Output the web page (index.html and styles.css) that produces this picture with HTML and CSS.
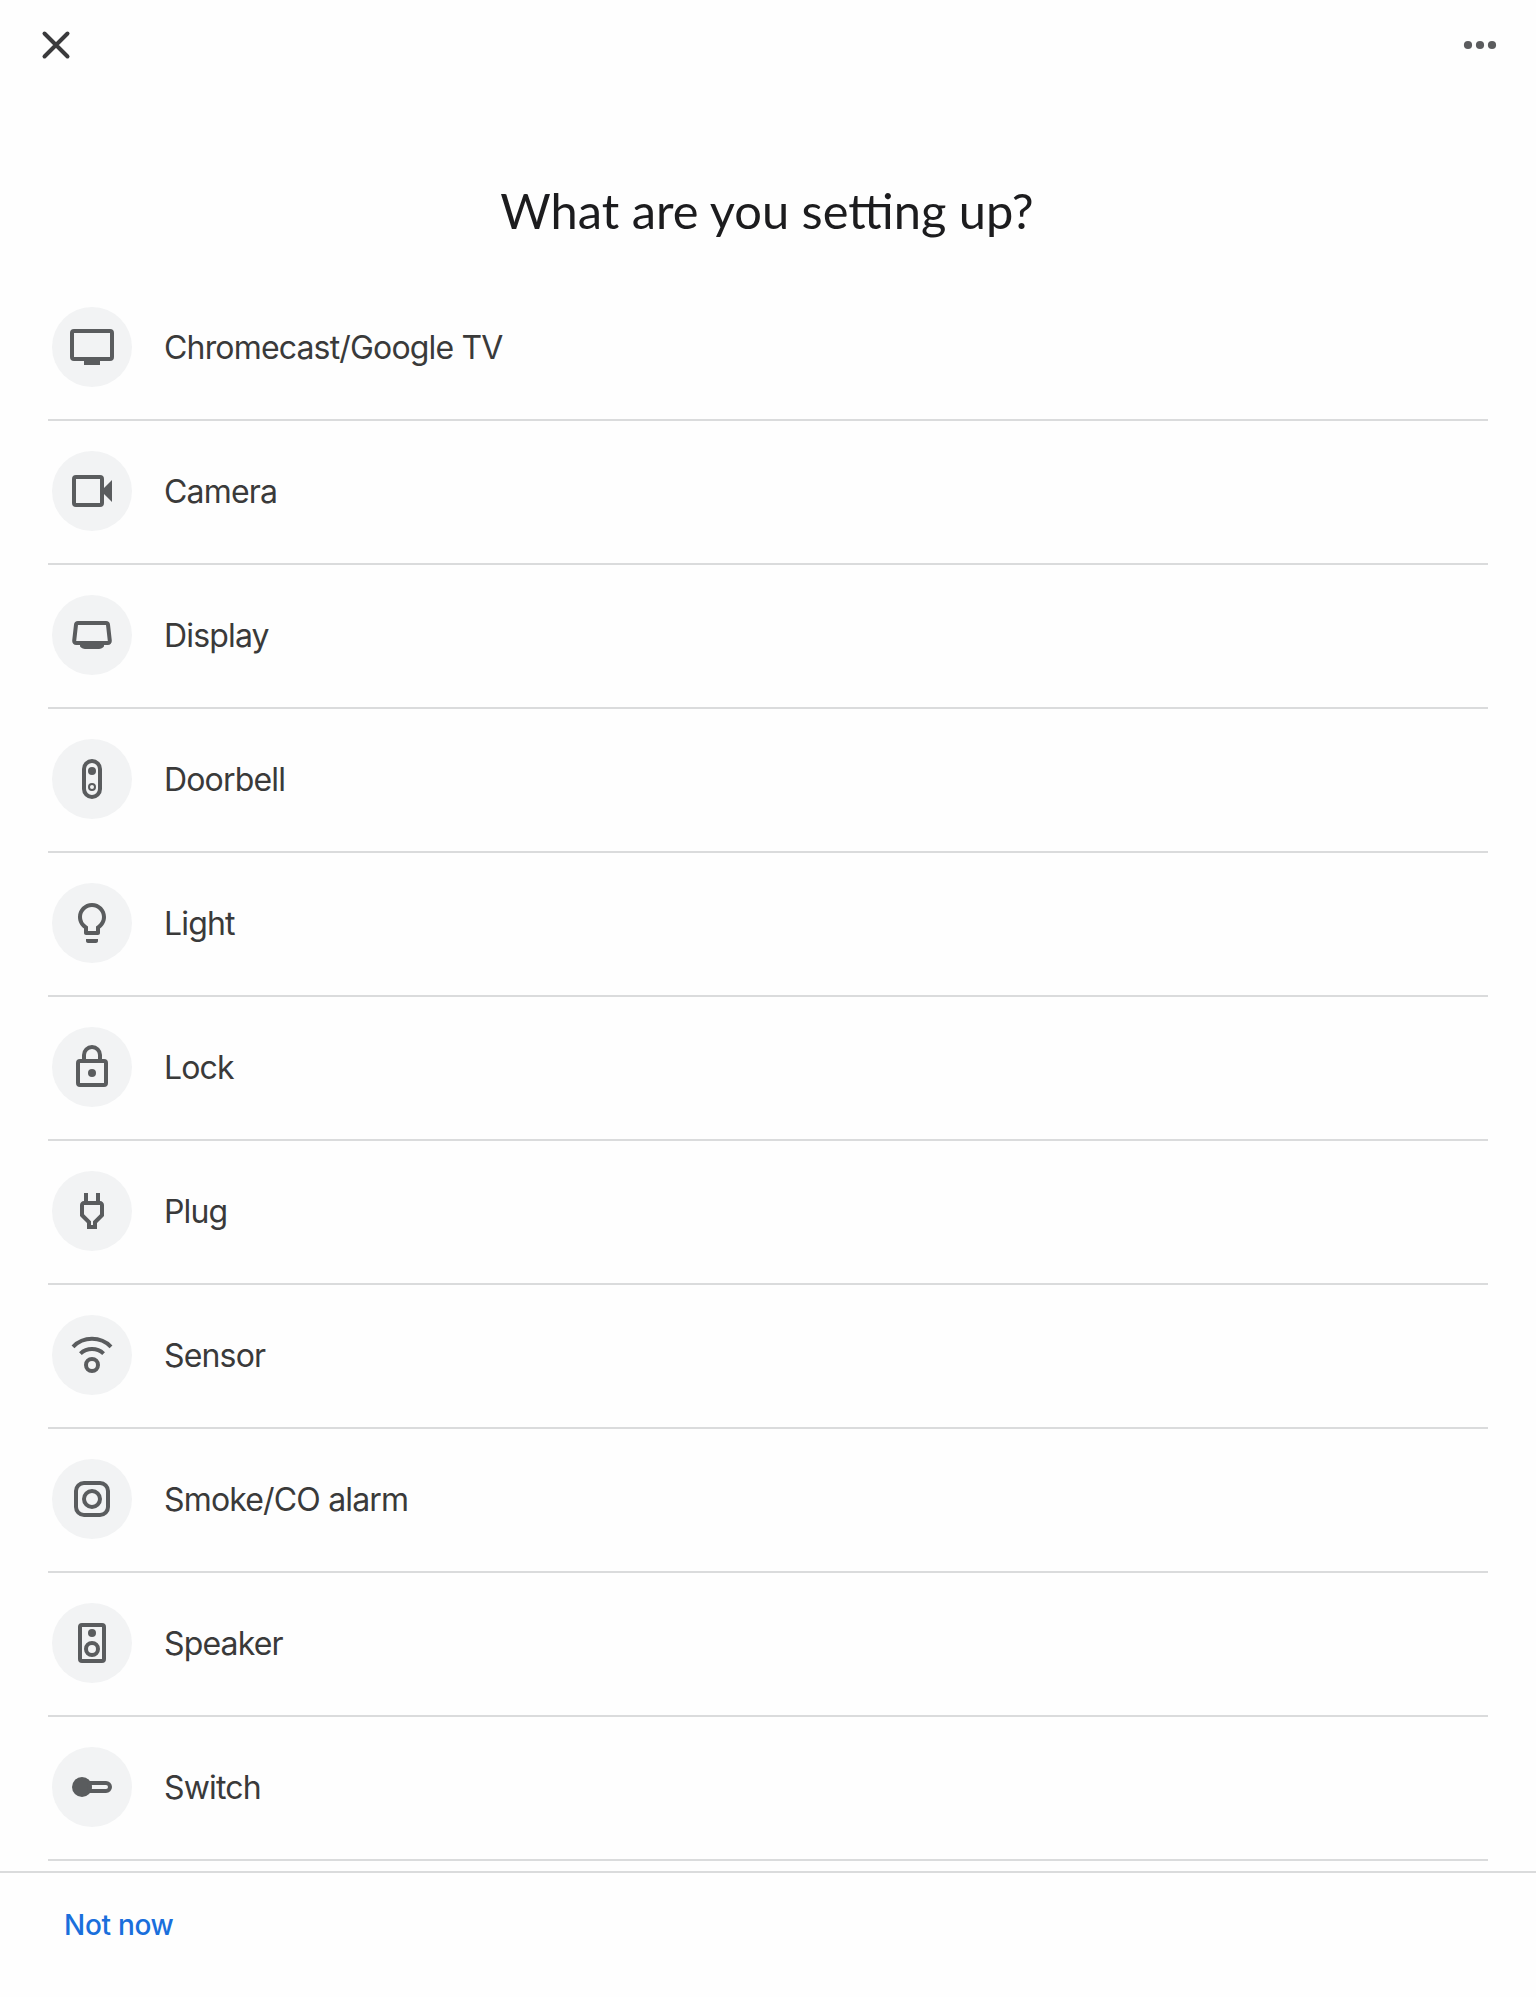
FILE: index.html
```html
<!DOCTYPE html>
<html lang="en">
<head>
    <meta charset="UTF-8">
    <meta name="viewport" content="width=device-width, initial-scale=1.0">
    <title>What are you setting up?</title>
    <link rel="stylesheet" href="styles.css">
</head>
<body>
    <header class="topbar">
        <button class="icon-button" aria-label="Close">
            <svg class="close" viewBox="0 0 48 48"><path d="M12.500 12.500L35.500 35.500M35.500 12.500L12.500 35.500"/></svg>
        </button>
        <button class="icon-button" aria-label="More">
            <svg class="more" viewBox="0 0 48 48"><circle cx="12" cy="24" r="4.1"/><circle cx="24" cy="24" r="4.1"/><circle cx="36" cy="24" r="4.1"/></svg>
        </button>
    </header>

    <main class="content">
        <h1 class="title">What are you setting up?</h1>
        <ul class="devices">
            <li class="device">
                <span class="badge"><svg class="icon" viewBox="0 0 24 24"><rect class="line" x="2" y="4" width="20" height="14" rx="1"/><path d="M8 19h8v2H8z"/></svg></span>
                <span class="label">Chromecast/Google TV</span>
            </li>
            <li class="device">
                <span class="badge"><svg class="icon" viewBox="0 0 24 24"><rect class="line" x="3" y="5" width="14" height="14" rx="1"/><path d="M18 10.5l4-4v11l-4-4z"/></svg></span>
                <span class="label">Camera</span>
            </li>
            <li class="device">
                <span class="badge"><svg class="icon" viewBox="0 0 24 24"><path class="line" d="M5 6h14a1 1 0 0 1 1 .9l.9 8a1 1 0 0 1-1 1.1H4.100a1 1 0 0 1-1-1.100l.9-8A1 1 0 0 1 5 6z"/><path d="M6 16.500h12v.9c0 .9-1.500 1.600-3 1.600H9c-1.500 0-3-.7-3-1.600z"/></svg></span>
                <span class="label">Display</span>
            </li>
            <li class="device">
                <span class="badge"><svg class="icon" viewBox="0 0 24 24"><rect class="line" x="8" y="3" width="8" height="18" rx="4"/><circle cx="12" cy="8" r="2"/><circle class="line thin" cx="12" cy="16" r="1.5"/></svg></span>
                <span class="label">Doorbell</span>
            </li>
            <li class="device">
                <span class="badge"><svg class="icon" viewBox="0 0 24 24"><path d="M9 21c0 .55.45 1 1 1h4c.55 0 1-.45 1-1v-1H9v1zm3-19C8.140 2 5 5.140 5 9c0 2.380 1.190 4.470 3 5.740V17c0 .55.45 1 1 1h6c.55 0 1-.45 1-1v-2.260c1.810-1.270 3-3.360 3-5.740 0-3.860-3.140-7-7-7zm2.850 11.100l-.85.6V16h-4v-2.300l-.85-.6A4.997 4.997 0 0 1 7 9c0-2.760 2.240-5 5-5s5 2.240 5 5c0 1.630-.8 3.160-2.150 4.100z"/></svg></span>
                <span class="label">Light</span>
            </li>
            <li class="device">
                <span class="badge"><svg class="icon" viewBox="0 0 24 24"><rect class="line" x="5" y="9" width="14" height="12" rx="1"/><path class="line" d="M8 9V6a4 4 0 0 1 8 0v3"/><circle cx="12" cy="15" r="2"/></svg></span>
                <span class="label">Lock</span>
            </li>
            <li class="device">
                <span class="badge"><svg class="icon" viewBox="0 0 24 24"><path d="M16 9v4.660l-3.500 3.510V19h-1v-1.830L8 13.650V9h8m0-6h-2v4h-4V3H8v4h-.01C6.900 6.990 6 7.890 6 8.980v5.520L9.500 18v3h5v-3l3.500-3.510V9c0-1.100-.9-2-2-2V3z"/></svg></span>
                <span class="label">Plug</span>
            </li>
            <li class="device">
                <span class="badge"><svg class="icon" viewBox="0 0 24 24"><path class="line" d="M2.500 7.900a13.300 13.300 0 0 1 19 0M6.200 11.300a8.500 8.500 0 0 1 11.600 0"/><circle class="line" cx="12" cy="17" r="3"/></svg></span>
                <span class="label">Sensor</span>
            </li>
            <li class="device">
                <span class="badge"><svg class="icon" viewBox="0 0 24 24"><rect class="line" x="4" y="4" width="16" height="16" rx="4"/><circle class="line" cx="12" cy="12" r="4"/></svg></span>
                <span class="label">Smoke/CO alarm</span>
            </li>
            <li class="device">
                <span class="badge"><svg class="icon" viewBox="0 0 24 24"><rect class="line" x="6" y="3" width="12" height="18" rx="1"/><circle cx="12" cy="7" r="2"/><circle class="line" cx="12" cy="15" r="3"/></svg></span>
                <span class="label">Speaker</span>
            </li>
            <li class="device">
                <span class="badge"><svg class="icon" viewBox="0 0 24 24"><circle cx="7" cy="12" r="5"/><path class="line" d="M10.800 10H19a2 2 0 0 1 0 4h-8.200z"/></svg></span>
                <span class="label">Switch</span>
            </li>
        </ul>
    </main>

    <footer class="footer">
        <button class="not-now">Not now</button>
    </footer>
</body>
</html>
```

FILE: styles.css
```css
* {
    box-sizing: border-box;
}
body {
    margin: 0;
    height: 1997px;
    display: flex;
    flex-direction: column;
    background: #fefefe;
    font-family: Inter, "Liberation Sans", sans-serif;
    color: #3a3a3a;
}
button {
    border: 0;
    padding: 0;
    background: none;
    font: inherit;
    cursor: pointer;
}
.topbar {
    display: flex;
    justify-content: space-between;
    padding: 21px 32px 0;
}
.icon-button,
.icon-button svg {
    display: block;
    width: 48px;
    height: 48px;
}
.close {
    stroke: #3a3a3c;
    stroke-width: 4;
    stroke-linecap: round;
}
.more {
    fill: #5b5c5e;
}
.content {
    flex: 1;
    padding: 0 48px;
}
.title {
    height: 208px;
    margin: 0;
    padding: 111px 2px 0 0;
    font-family: Lato, Inter, sans-serif;
    font-size: 48.8px;
    font-weight: 400;
    line-height: 60px;
    text-align: center;
    color: #1c1c1e;
}
.devices {
    margin: 0;
    padding: 0;
    list-style: none;
}
.device {
    display: flex;
    align-items: center;
    gap: 32px;
    height: 144px;
    padding: 0 4px 2px;
    border-bottom: 2px solid #dadbdc;
}
.badge {
    display: flex;
    align-items: center;
    justify-content: center;
    width: 80px;
    height: 80px;
    border-radius: 50%;
    background: #f2f3f4;
}
.icon {
    width: 48px;
    height: 48px;
    fill: #5a5c5e;
}
.line {
    fill: none;
    stroke: #5a5c5e;
    stroke-width: 2;
}
.thin {
    stroke-width: 1;
}
.label {
    padding-top: 1px;
    font-size: 32px;
    line-height: 40px;
    letter-spacing: -0.83px;
}
.footer {
    height: 126px;
    padding: 32px 64px 0;
    border-top: 2px solid #dadbdc;
}
.not-now {
    font-size: 28px;
    font-weight: 500;
    line-height: 40px;
    letter-spacing: -0.3px;
    color: #1a6fdc;
}
```
